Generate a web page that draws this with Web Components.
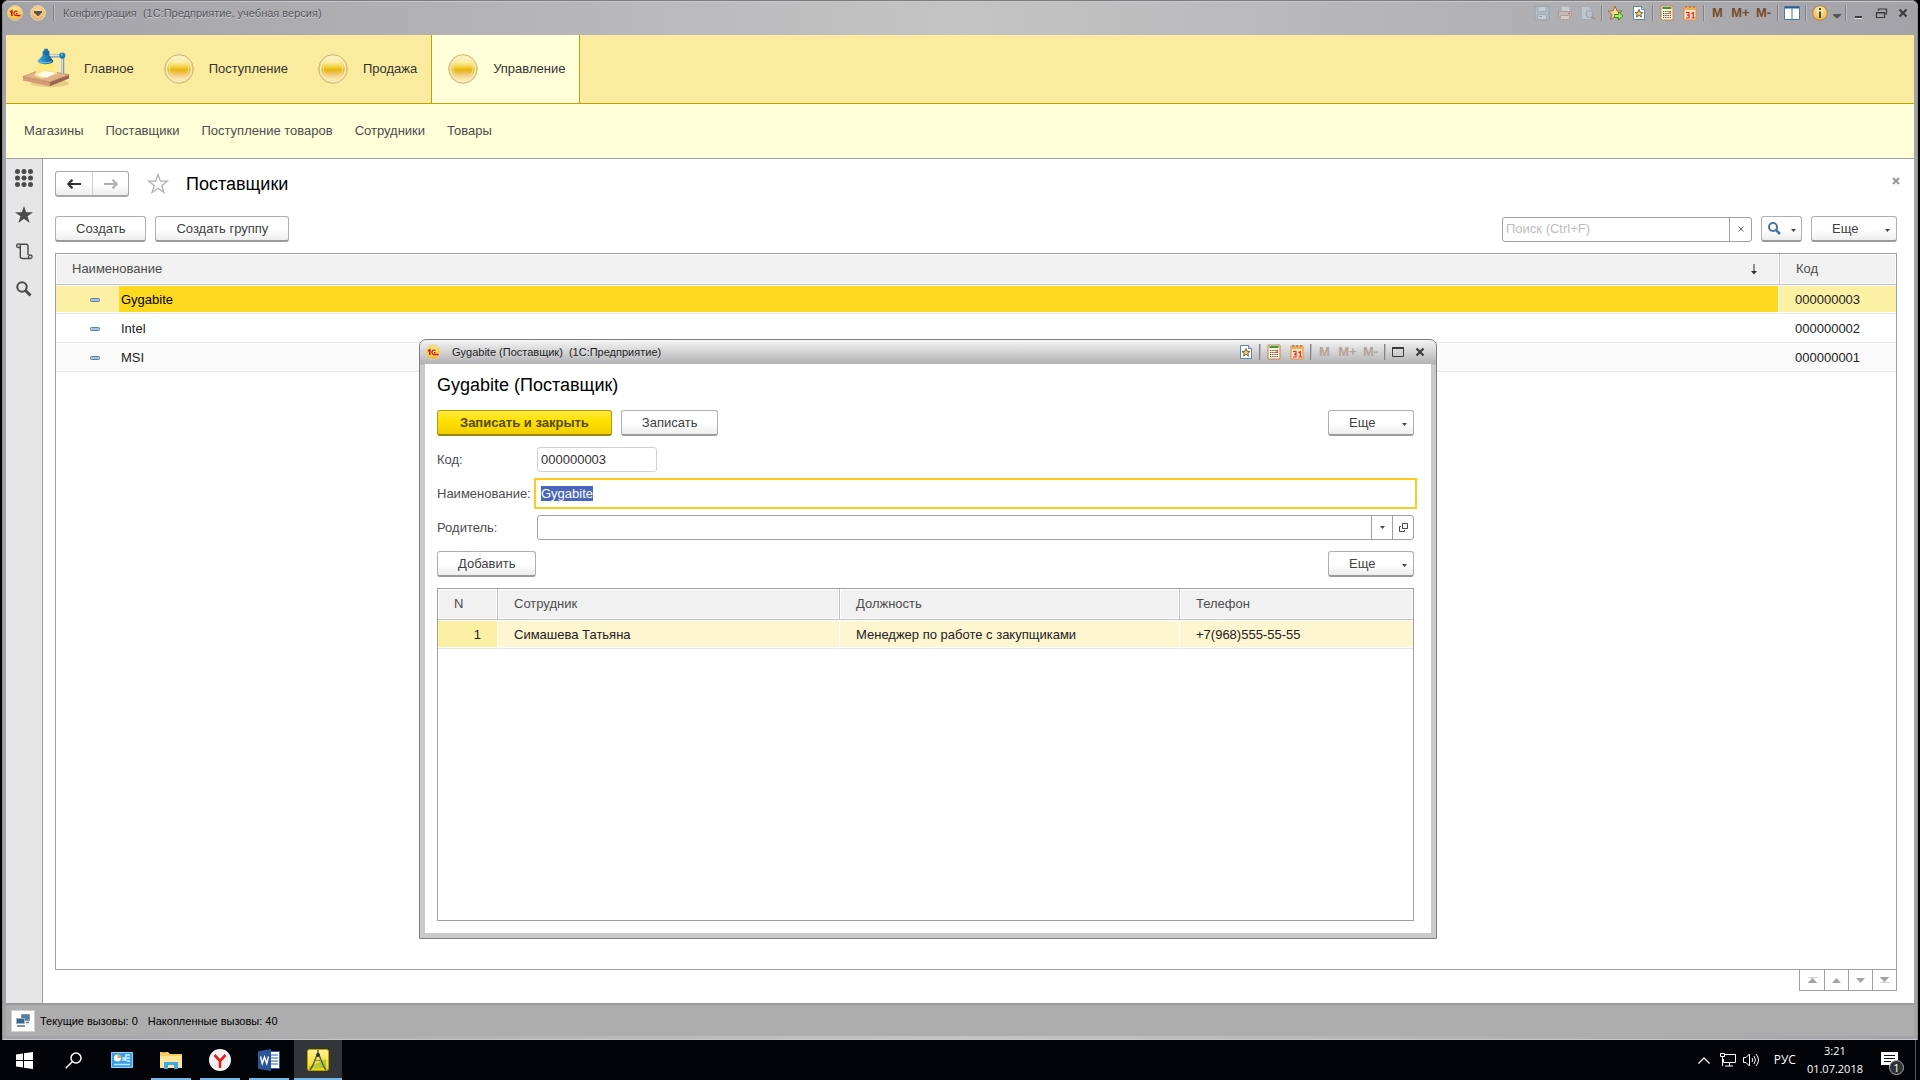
<!DOCTYPE html>
<html lang="ru">
<head>
<meta charset="utf-8">
<title>Конфигурация (1С:Предприятие, учебная версия)</title>
<style>
  html, body { height: 100%; margin: 0; }
  body { background: #000; color: #404040; font: 13px/16px "Liberation Sans", Arial, sans-serif; overflow: hidden; }
</style>
</head>
<body>
<app-desktop>
  <app-window>
    <title-bar slot="title" kind="main" caption="Конфигурация  (1С:Предприятие, учебная версия)"></title-bar>
    <section-bar slot="sections">
      <section-tab icon="lamp" wide>Главное</section-tab>
      <section-tab icon="coin">Поступление</section-tab>
      <section-tab icon="coin">Продажа</section-tab>
      <section-tab icon="coin" active>Управление</section-tab>
    </section-bar>
    <sub-nav slot="nav" items="Магазины|Поставщики|Поступление товаров|Сотрудники|Товары"></sub-nav>
    <side-rail slot="rail"></side-rail>
    <list-page></list-page>
    <status-bar slot="status"></status-bar>
  </app-window>
  <supplier-dialog slot="dialog"></supplier-dialog>
  <task-bar slot="taskbar"></task-bar>
</app-desktop>

<script>
const svg = (w, h, body) => `<svg width="${w}" height="${h}" viewBox="0 0 ${w} ${h}" aria-hidden="true">${body}</svg>`;
const starPath = "M8 1l2 5h5l-4 3.300 1.500 5.200L8 11.500l-4.500 3L5 9.300 1 6h5z";

const ICONS = {
  logo: svg(16, 16, `<defs><radialGradient id="g" cx=".5" cy=".35" r=".7"><stop offset="0" stop-color="#fff6a0"/><stop offset=".7" stop-color="#f7c948"/><stop offset="1" stop-color="#c98a3c"/></radialGradient></defs><circle cx="8" cy="8" r="7.300" fill="url(#g)" stroke="#e9d3b4"/><path d="M3 7.200L4.800 5.800V11" fill="none" stroke="#d8150d" stroke-width="1.600"/><path d="M10.500 6.600A2.200 2.200 0 1 0 9 10.500h4.500M9 8.700h1.500" fill="none" stroke="#d8150d" stroke-width="1.300"/>`),
  menuBall: svg(16, 16, `<defs><radialGradient id="g" cx=".5" cy=".4" r=".65"><stop offset="0" stop-color="#fde4b4"/><stop offset=".7" stop-color="#f2bb70"/><stop offset="1" stop-color="#c98d4c"/></radialGradient></defs><circle cx="8" cy="8" r="7.300" fill="url(#g)" stroke="#f2d8b5"/><path d="M4 6h8v1.500L8.500 11h-1L4 7.500z" fill="#5d5347"/>`),
  save: svg(16, 16, `<g opacity=".55"><path d="M1 1h14v14H1z" fill="#b3c6d3" stroke="#7d99ae"/><path d="M4 1.500h8v5H4zM3.500 9.500h9v5h-9z" fill="#dfe6ea" stroke="#8fa6b6"/><path d="M5 11.500h3" stroke="#7d99ae"/></g>`),
  print: svg(16, 16, `<g opacity=".55"><path d="M4 1h7l2 2v4H4z" fill="#e2e5ea" stroke="#98a2b0"/><path d="M1.500 6.500h13v6h-13z" fill="#d8c5ba" stroke="#ac8d80"/><path d="M3.500 10.500h9v4h-9z" fill="#f1e9e1" stroke="#a89a92"/><path d="M11 8.500h2" stroke="#d0593c" stroke-width="1.500"/></g>`),
  preview: svg(16, 16, `<g opacity=".55"><path d="M1.500 1.500h7l3 3v10h-10z" fill="#cbd8e2" stroke="#9cb0c0"/><circle cx="9.500" cy="9" r="3.500" fill="#c1d5e4" stroke="#8196a9"/><path d="M12 11.500l3 3" stroke="#b57c66" stroke-width="2"/></g>`),
  starAdd: svg(17, 16, `<path d="${starPath}" fill="#ffd998" stroke="#98703a"/><path d="M7.500 9.500h4v-2.500l4.500 4-4.500 4v-2.500h-4z" fill="#a6ea68" stroke="#3f8f20"/>`),
  starPage: svg(16, 16, `<path d="M2.500 1.500h8l3 3v10h-11z" fill="#fff" stroke="#5f87a4"/><path d="M10.500 1.500v3h3" fill="#dfeaf2" stroke="#5f87a4"/><path d="M8 4.500l1.200 2.800 2.800.200-2.200 1.700.8 2.900L8 10.400l-2.600 1.700.8-2.900L4 7.500l2.800-.2z" fill="#f7c766" stroke="#5d5849" stroke-width=".9"/>`),
  calc: svg(14, 16, `<path d="M1 1h12v14H1z" fill="#fff3dc" stroke="#b98753"/><path d="M2.500 3h9" stroke="#3f963d" stroke-width="2"/><path d="M3 6.500h8M3 8.500h8M3 10.500h8M3 12.500h8" stroke="#6d4a35" stroke-dasharray="1.300 .93"/><path d="M10 6v3" stroke="#df4c31" stroke-width="1.300"/>`),
  calendar: svg(14, 16, `<path d="M1 2h12v13H1z" fill="#ffe0c2" stroke="#dc8e4b"/><path d="M1 2h12v3H1z" fill="#e9b05a"/><path d="M3 1v2M7 1v2M11 1v2" stroke="#8e6336"/><path d="M3 7.500h3v5.500H3M4 10.200h2M8.500 8.700L10.300 7.500V13M8.500 13H12" fill="none" stroke="#e32a1c" stroke-width="1.200"/>`),
  panels: svg(16, 14, `<path d="M.5.500h15v13H.5z" fill="#fff" stroke="#467da8"/><path d="M1 1.500h14" stroke="#2b5f8c" stroke-width="2"/><path d="M8 2v11" stroke="#467da8"/>`),
  info: svg(16, 16, `<defs><radialGradient id="g" cx=".5" cy=".3" r=".8"><stop offset="0" stop-color="#fff0c0"/><stop offset=".8" stop-color="#f2b34e"/><stop offset="1" stop-color="#a86e2a"/></radialGradient></defs><circle cx="8" cy="8" r="7.300" fill="url(#g)" stroke="#b38549"/><path d="M8 3v2M8 6.500V13" stroke="#3c5c20" stroke-width="2"/>`),
  caretWide: svg(8, 4, `<path d="M0 0h8v1L5 4H3L0 1z" fill="#555"/>`),
  minimize: svg(10, 12, `<path d="M1 10h7" stroke="#3c3c3c" stroke-width="2"/><path d="M1 11.500h7" stroke="#e3e3e3"/>`),
  restore: svg(13, 12, `<path d="M3.500 4V2h8v5H10M3 2h9" fill="none" stroke="#3c3c3c" stroke-width="1.200"/><path d="M1.500 5.500h8v5h-8zM1 6h9" fill="none" stroke="#3c3c3c" stroke-width="1.200"/>`),
  maximize: svg(12, 12, `<path d="M.5 1.500h11v9H.5z" fill="none" stroke="#3c3c3c"/><path d="M0 2h12" stroke="#3c3c3c" stroke-width="2"/>`),
  close: svg(10, 10, `<path d="M1.500 1.500l7 7M8.500 1.500l-7 7" stroke="#3c3c3c" stroke-width="2.200"/>`),
  lamp: svg(50, 44, `<defs><linearGradient id="b" x1="0" x2="1"><stop offset="0" stop-color="#4aa9d6"/><stop offset=".5" stop-color="#2382b9"/><stop offset="1" stop-color="#0e5682"/></linearGradient><linearGradient id="y" x1="0" x2="0" y1="0" y2="1"><stop offset="0" stop-color="#ffe96b"/><stop offset="1" stop-color="#fff3a5" stop-opacity=".7"/></linearGradient></defs>
    <ellipse cx="29" cy="37" rx="20" ry="4" fill="#d4bb78" opacity=".6"/>
    <path d="M1 30L29 35.500V40L1 34z" fill="#d69a75"/><path d="M29 35.500L49 28V32L29 40z" fill="#99664a"/>
    <path d="M1 30L20 22.500 49 28 29 35.500z" fill="#e1b38b" stroke="#b77f5c" stroke-width=".7"/>
    <path d="M18 16h14l5 11-16 5-8-3z" fill="url(#y)"/><path d="M15 28l8-4 12 2-9 5z" fill="#fffce8"/>
    <path d="M26 8.500h16M42.500 10V27" stroke="#8598a4" stroke-width="3"/><path d="M27 8h15M42 10V27" stroke="#dce4e8" stroke-width="1.200"/>
    <path d="M23 1h4v2h1.500v5l4 5.500q1 3-8 3.500-9-.5-8-3.500l5-5.500V3H23z" fill="url(#b)"/><path d="M18 14.500q6.500 2 13 0" fill="none" stroke="#7fc4e6"/><path d="M22 4.500h6M22 6.500h6" stroke="#11517a" stroke-width=".8"/><circle cx="42" cy="8" r="3.200" fill="#1c7fb5"/><circle cx="41.500" cy="7" r="1.200" fill="#71bde0"/>`),
  coin: svg(32, 32, `<defs><linearGradient id="a" x1="0" x2="0" y1="0" y2="1"><stop offset="0" stop-color="#fffbe2"/><stop offset=".22" stop-color="#fbec9c"/><stop offset=".42" stop-color="#f1cf3a"/><stop offset=".54" stop-color="#e5b60f"/><stop offset=".66" stop-color="#ecc04c"/><stop offset=".8" stop-color="#f6cf8a"/><stop offset="1" stop-color="#fdeecb"/></linearGradient><linearGradient id="r" x1="0" x2="0" y1="0" y2="1"><stop offset="0" stop-color="#fbf0b4"/><stop offset=".52" stop-color="#ecd06a"/><stop offset="1" stop-color="#f8e2ac"/></linearGradient></defs>
    <circle cx="16" cy="16" r="14.300" fill="url(#r)" stroke="#cfb878" stroke-width="1"/><circle cx="16" cy="16" r="12.500" fill="none" stroke="#fdf5cd" stroke-width="1"/><circle cx="16" cy="16" r="11.300" fill="url(#a)"/><circle cx="16" cy="16" r="9.800" fill="none" stroke="#f7e295" stroke-width=".9"/>`),
  grid: svg(18, 18, `<g fill="#4a4a4a">${[2.5, 9, 15.5].map(y => [2.5, 9, 15.5].map(x => `<circle cx="${x}" cy="${y}" r="2.500"/>`).join("")).join("")}</g>`),
  starSolid: svg(18, 17, `<path d="M9 0l2.200 6.200H18l-5.500 4 2.200 6.800L9 12.800 3.300 17l2.200-6.800L0 6.200h6.800z" fill="#4a4a4a"/>`),
  scroll: svg(17, 17, `<path d="M3.700 4.500H2.500a1.800 1.800 0 1 1 1.800-1.800V13.500a2 2 0 0 0 2 2H14M3 1.200h7a2 2 0 0 1 2 2V12" fill="none" stroke="#4a4a4a" stroke-width="1.400"/><circle cx="14.300" cy="13.800" r="1.800" fill="none" stroke="#4a4a4a" stroke-width="1.300"/>`),
  search: svg(16, 16, `<circle cx="6" cy="6" r="4.700" fill="none" stroke="#4a4a4a" stroke-width="2"/><path d="M9.500 9.500l5 5" stroke="#4a4a4a" stroke-width="3"/>`),
  find: svg(13, 13, `<circle cx="5" cy="5" r="4" fill="none" stroke="#4d7299" stroke-width="2"/><path d="M8 8l4 4" stroke="#4d7299" stroke-width="2.500"/>`),
  back: svg(14, 10, `<path d="M1 5h13M5.500.7L1.200 5l4.300 4.300" fill="none" stroke="#333" stroke-width="2.200"/>`),
  forward: svg(14, 10, `<path d="M0 5h13M8.500.7L12.800 5 8.500 9.300" fill="none" stroke="#b0b0b0" stroke-width="2.200"/>`),
  starLine: svg(22, 21, `<path d="M11 1.500l2.400 6.700h7l-5.600 4.300 2.100 7L11 15.300 5.100 19.500l2.100-7L1.600 8.200h7z" fill="#fff" stroke="#b0b0b0" stroke-width="1.300"/>`),
  pageClose: svg(8, 8, `<path d="M1 1l6 6M7 1L1 7" stroke="#999" stroke-width="2"/>`),
  clear: svg(6, 6, `<path d="M.5.500l5 5M5.500.500l-5 5" stroke="#555" stroke-width=".9"/>`),
  caret: svg(5, 3, `<path d="M0 0h5L2.500 3z" fill="#444"/>`),
  sort: svg(6, 11, `<path d="M3 0v9" stroke="#333"/><path d="M0 7h6L3 10.500z" fill="#333"/>`),
  item: svg(10, 4, `<rect x=".5" y=".5" width="9" height="3" rx="1" fill="#a7c4dc" stroke="#5b7f9f"/>`),
  first: svg(9, 6, `<path d="M0 .5h9M4.500 1L9 6H0z" fill="#a3a3a3" stroke="#a3a3a3" stroke-width=".5"/>`),
  up: svg(9, 5, `<path d="M4.500 0L9 5H0z" fill="#a3a3a3"/>`),
  down: svg(9, 5, `<path d="M0 0h9L4.500 5z" fill="#a3a3a3"/>`),
  last: svg(9, 6, `<path d="M0 5.500h9M0 0h9L4.500 5z" fill="#a3a3a3" stroke="#a3a3a3" stroke-width=".5"/>`),
  open: svg(9, 9, `<path d="M3.500.500h5v5h-5zM2 3.500H.5v5h5V7" fill="none" stroke="#444"/>`),
  servers: svg(14, 13, `<path d="M5.500.500h8v6h-8z" fill="#547ea0" stroke="#8496a3"/><path d="M.5 4.500h8v5h-8z" fill="#31658c" stroke="#9db0bd"/><path d="M1 12h8M10 8.500h3" stroke="#60727e" stroke-width="1.500"/>`),
  windows: svg(17, 17, `<path d="M0 2.500L7 1.500V8H0zM8 1.300L17 0V8H8zM0 9h7v6.500L0 14.500zM8 9h9v8L8 15.700z" fill="#fff"/>`),
  taskSearch: svg(17, 17, `<circle cx="11" cy="6" r="5" fill="none" stroke="#fff" stroke-width="1.500"/><path d="M7.200 9.800L.7 16.300" stroke="#fff" stroke-width="1.500"/>`),
  panelApp: svg(22, 16, `<path d="M.5.500h21v15H.5z" fill="#39a0e3" stroke="#8fd3ff"/><circle cx="6.500" cy="6" r="3.500" fill="#fff"/><path d="M6.500 6V2.500A3.500 3.500 0 0 1 10 6z" fill="#f0a73a"/><path d="M12 9V6h2v3M15 9V3h4M16 6h3M16 9h3" fill="none" stroke="#d9f1ff" stroke-width="1.300"/><path d="M3 12.500h16" stroke="#bfe6ff" stroke-width="1.500"/>`),
  explorer: svg(22, 18, `<path d="M0 1h8l2 2h12v14H0z" fill="#f4cf63"/><path d="M0 5h22v12H0z" fill="#ffe597"/><path d="M4 18v-7h14v7h-4v-4H8v4z" fill="#3fa9e6"/><path d="M2 1.500h4" stroke="#e79b2f"/>`),
  yandex: svg(22, 22, `<circle cx="11" cy="11" r="11" fill="#f2f2f2"/><path d="M5.500 6l5.500 6 5.500-6M11 12v7" fill="none" stroke="#e0201b" stroke-width="2.600"/>`),
  word: svg(22, 22, `<path d="M11 2.500h10.500v17H11z" fill="#fff" stroke="#2f5da8"/><path d="M13 6h7M13 9h7M13 12h7M13 15h7" stroke="#2f5da8" stroke-width="1.200"/><path d="M0 2.300L13 0v22L0 19.700z" fill="#2b579a"/><path d="M2.500 7.500L4.300 14.500 6.500 8l2.200 6.500 1.800-7" fill="none" stroke="#fff" stroke-width="1.400"/>`),
  compass: svg(22, 22, `<defs><linearGradient id="c" x1="0" x2="0" y1="0" y2="1"><stop offset="0" stop-color="#fff39a"/><stop offset="1" stop-color="#efd800"/></linearGradient></defs><rect x=".5" y=".5" width="21" height="21" rx="2" fill="url(#c)" stroke="#bba100"/><path d="M2 18L19 10v9l-17 1z" fill="#b2cb34"/><path d="M11 1v5M10 6L6 16l-3 5M12 6l4 10 3 5" fill="none" stroke="#5a5a52" stroke-width="1.500"/><path d="M8 11q3 1.500 6 0" fill="none" stroke="#77776c"/><circle cx="11" cy="6" r="2" fill="#33332e"/>`),
  chevron: svg(12, 7, `<path d="M.5 6.500L6 1l5.500 5.500" fill="none" stroke="#fff" stroke-width="1.300"/>`),
  network: svg(16, 14, `<path d="M5 1.500h10.500v8H3.500V6M9.500 10v3M5 13h8" fill="none" stroke="#fff"/><path d="M.5.500h4v3h-4zM2.500 4v9" fill="none" stroke="#fff"/>`),
  volume: svg(17, 14, `<path d="M.5 4.500H3L6.500 1v12L3 9.500H.5z" fill="none" stroke="#fff"/><path d="M9 5q1.500 2 0 4M11 3q3 4 0 8M13 1q5 6 0 12" fill="none" stroke="#fff"/>`),
  note: svg(17, 16, `<path d="M0 0h17v13h-6l-3 3v-3H0z" fill="#fff"/><path d="M3 3.500h11M3 6.500h11M3 9.500h7" stroke="#111"/>`)
};

class Base extends HTMLElement {
  constructor() { super(); this.attachShadow({ mode: "open" }); }
  connectedCallback() {
    this.shadowRoot.innerHTML = `<style>:host,*{box-sizing:border-box}button{font:inherit;color:inherit}${this.css()}</style>${this.html()}`;
    this.ready();
  }
  css() { return ""; }
  html() { return "<slot></slot>"; }
  ready() {}
}
const define = (name, cls) => customElements.define(name, cls);

define("ui-icon", class extends Base {
  css() { return `:host{display:inline-flex;flex:none;align-items:center;justify-content:center}svg{display:block}`; }
  html() { return ICONS[this.getAttribute("name")] || ""; }
});

define("ui-button", class extends Base {
  css() { return `:host{display:block;flex:none}
    button{display:flex;align-items:center;justify-content:center;gap:8px;width:100%;height:26px;padding:1px 20px 0;color:#404040;
      border:1px solid #b0b0b0;border-bottom:2px solid #9a9a9a;border-radius:3px;background:linear-gradient(#fff 55%,#ededed);white-space:nowrap}
    :host([primary]) button{font-weight:bold;padding:1px 22px 0;color:#54490a;border-color:#b39d0c;border-bottom-color:#998500;background:linear-gradient(#ffea3d,#ffe000 45%,#efcd00)}
    :host([menu]) button{width:86px;padding:1px 6px 0 20px;justify-content:space-between}
    :host([menu]) ui-icon{margin-top:3px}
    :host([find]) button{width:41px;padding:0 6px}`; }
  html() {
    const caret = this.hasAttribute("menu") ? `<ui-icon name="caret"></ui-icon>` : "";
    return `<button type="button" aria-label="${this.getAttribute("label") || ""}"><slot></slot>${caret}</button>`.replace(` aria-label=""`, "");
  }
});

define("title-bar", class extends Base {
  css() { return `
    :host{display:flex;align-items:center;height:35px;padding-bottom:9px;color:#55555a;text-shadow:0 1px 0 #d4d4d6}
    :host([kind=dialog]){height:24px;padding-bottom:0;color:#222}
    button{display:flex;align-items:center;justify-content:center;width:23px;height:22px;padding:0;border:0;background:none}
    .lead{display:flex;gap:7px;align-items:center;padding-left:1px}
    :host([kind=dialog]) .lead{padding-left:0}
    .lead button{width:16px}
    .cap{flex:1;padding-left:9px;font:11px/16px "Liberation Sans",Arial,sans-serif;white-space:pre}
    :host([kind=dialog]) .cap{padding-left:11px}
    i{width:1px;height:16px;margin:0 2px;background:#818186;box-shadow:1px 0 #bcbcbf}
    .lead i{margin:0}
    .m{font:bold 13px/16px "Liberation Sans",Arial,sans-serif;color:#7a4a2c;text-shadow:none}
    :host([kind=dialog]) .m{color:#b1a49c}
    .narrow{width:12px;padding-top:5px}
    .tools{display:flex;align-items:center}
    .end button{width:22px}.end{display:flex}`; }
  html() {
    const b = (n, t, c = "") => `<button type="button" class="${c}" aria-label="${t}"><ui-icon name="${n}"></ui-icon></button>`;
    const m = `<button type="button" class="m">M</button><button type="button" class="m">M+</button><button type="button" class="m">M-</button>`;
    const cap = `<span class="cap">${this.getAttribute("caption")}</span>`;
    if (this.getAttribute("kind") === "dialog")
      return `<span class="lead">${b("logo", "Меню")}</span>${cap}
        <span class="tools">${b("starPage", "Избранное")}<i></i>${b("calc", "Калькулятор")}${b("calendar", "Календарь")}<i></i>${m}<i></i></span>
        <span class="end">${b("maximize", "Развернуть")}${b("close", "Закрыть")}</span>`;
    return `<span class="lead">${b("logo", "Меню")}${b("menuBall", "Главное меню")}<i></i></span>${cap}
      <span class="tools">${b("save", "Сохранить")}${b("print", "Печать")}${b("preview", "Просмотр")}<i></i>${b("starAdd", "Добавить в избранное")}${b("starPage", "Избранное")}<i></i>${b("calc", "Калькулятор")}${b("calendar", "Календарь")}<i></i>${m}<i></i>${b("panels", "Панели")}<i></i>${b("info", "Справка")}${b("caretWide", "Еще", "narrow")}<i></i></span>
      <span class="end">${b("minimize", "Свернуть")}${b("restore", "Восстановить")}${b("close", "Закрыть")}</span>`;
  }
});

define("section-bar", class extends Base {
  css() { return `:host{display:flex;height:69px;background:#fbeb9e;border-bottom:1px solid #bfa200}`; }
});
define("section-tab", class extends Base {
  css() { return `:host{display:block}
    a{display:flex;align-items:center;gap:6px;height:100%;padding:0 14px 0 7px;color:#333;text-decoration:none}
    ui-icon{width:48px}
    :host([wide]) a{gap:14px;padding-left:16px}
    :host([active]){background:#ffffd9;border:solid #bfa200;border-width:0 1px}`; }
  html() { return `<a href="#"><ui-icon name="${this.getAttribute("icon")}"></ui-icon><slot></slot></a>`; }
});
define("sub-nav", class extends Base {
  css() { return `:host{display:flex;align-items:center;gap:22px;height:55px;padding:0 18px;background:#ffffd9;border-bottom:1px solid #9e9e9e}
    a{color:#4d4d4d;text-decoration:none}`; }
  html() { return this.getAttribute("items").split("|").map(t => `<a href="#">${t}</a>`).join(""); }
});
define("side-rail", class extends Base {
  css() { return `:host{display:flex;flex:none;flex-direction:column;align-items:center;gap:8px;width:37px;padding-top:4px;background:#e6e6e6;border-right:1px solid #9e9e9e}
    button{display:flex;align-items:center;justify-content:center;width:32px;height:29px;padding:0;border:0;background:none}`; }
  html() { return [["grid", "Меню функций"], ["starSolid", "Избранное"], ["scroll", "История"], ["search", "Поиск"]].map(([n, t]) => `<button type="button" aria-label="${t}"><ui-icon name="${n}"></ui-icon></button>`).join(""); }
});

const gridCss = `
  table{width:100%;border-collapse:separate;border-spacing:0;table-layout:fixed}
  th{height:31px;padding:0;border-bottom:1px solid #c0c0c0;font-weight:normal;text-align:left;background:#f1f1f1;color:#4d4d4d;box-shadow:inset 0 0 0 1px #fff}
  th+th{border-left:1px solid #c0c0c0}
  td{height:29px;padding:1px 0 0;color:#222;border-bottom:1px solid #e5e5e5;box-shadow:inset 0 1px #fff,inset 0 -1px #fff}
  tbody tr{white-space:nowrap}`;

define("list-page", class extends Base {
  css() { return `:host{display:flex;flex:1;flex-direction:column;min-width:0;padding:12px 17px 12px 12px;background:#fff}
    .head{display:flex;align-items:center;height:26px}
    .nav{display:flex;height:26px;border:1px solid #a8a8a8;border-bottom-width:2px;border-radius:3px;background:linear-gradient(#fff 50%,#ededed);overflow:hidden}
    .nav button{display:flex;align-items:center;justify-content:center;width:36px;padding:0;border:0;background:none}
    .nav button+button{border-left:1px solid #cfcfcf}
    .star{margin-left:18px;padding:0;border:0;background:none;width:22px;height:22px}
    h1{flex:1;margin:0 0 0 17px;font:18px/24px "Liberation Sans",Arial,sans-serif;color:#000}
    .x{display:flex;margin:0 -4px 6px 0;padding:0;width:10px;border:0;background:none;justify-content:center}
    .bar{display:flex;align-items:center;gap:9px;margin-top:19px}
    .search{display:flex;height:25px;width:250px;margin-left:auto;border:1px solid #a0a0a0;border-radius:3px}
    .search input{flex:1;min-width:0;border:0;padding:0 3px;outline:0;background:none;font:inherit;color:#333}
    .search input::placeholder{color:#bdbdbd;opacity:1}
    .search button{display:flex;align-items:center;justify-content:center;width:22px;padding:0;border:0;border-left:1px solid #a0a0a0;background:none}
    .find{display:flex;align-items:center;gap:10px}
    .find ui-icon+ui-icon{margin-top:3px}
    .box{flex:1;margin-top:11px;border:1px solid #a0a0a0}
    ${gridCss}
    td.mark{padding-left:34px;vertical-align:middle}
    td.mark ui-icon{display:flex;width:10px}
    td.name{padding-left:2px}
    th.main,th.code,td.code{padding-left:16px}
    tr.odd td{background:#fafafa}
    tr.sel td{background:#fcf0a4}
    tr.sel td.name{background:#fcd91f;color:#000;border-right:1px solid #fff}
    .cap{display:flex;justify-content:space-between;align-items:center;padding-right:22px}
    .pager{display:flex;align-self:flex-end;border:solid #a0a0a0;border-width:0 1px 1px}
    .pager button{display:flex;align-items:center;justify-content:center;width:24px;height:20px;padding:0;border:0;background:none}
    .pager button+button{border-left:1px solid #a0a0a0}`; }
  html() {
    const rows = [["Gygabite", "000000003", "sel"], ["Intel", "000000002", ""], ["MSI", "000000001", "odd"]];
    return `<div class="head">
        <div class="nav"><button type="button" aria-label="Назад"><ui-icon name="back"></ui-icon></button><button type="button" aria-label="Вперед"><ui-icon name="forward"></ui-icon></button></div>
        <button class="star" type="button" aria-label="В избранное"><ui-icon name="starLine"></ui-icon></button>
        <h1>Поставщики</h1>
        <button class="x" type="button" aria-label="Закрыть"><ui-icon name="pageClose"></ui-icon></button>
      </div>
      <div class="bar">
        <ui-button>Создать</ui-button><ui-button>Создать группу</ui-button>
        <div class="search"><input type="text" aria-label="Поиск" placeholder="Поиск (Ctrl+F)"><button type="button" aria-label="Очистить"><ui-icon name="clear"></ui-icon></button></div>
        <ui-button find label="Найти"><span class="find"><ui-icon name="find"></ui-icon><ui-icon name="caret"></ui-icon></span></ui-button>
        <ui-button menu>Еще</ui-button>
      </div>
      <div class="box"><table>
        <colgroup><col style="width:63px"><col><col style="width:117px"></colgroup>
        <thead><tr><th class="main" colspan="2"><div class="cap">Наименование<ui-icon name="sort"></ui-icon></div></th><th class="code">Код</th></tr></thead>
        <tbody>${rows.map(([n, c, k]) => `<tr class="${k}"><td class="mark"><ui-icon name="item"></ui-icon></td><td class="name">${n}</td><td class="code">${c}</td></tr>`).join("")}</tbody>
      </table></div>
      <div class="pager">${[["first", "В начало"], ["up", "Вверх"], ["down", "Вниз"], ["last", "В конец"]].map(([n, t]) => `<button type="button" aria-label="${t}"><ui-icon name="${n}"></ui-icon></button>`).join("")}</div>`;
  }
});

define("supplier-dialog", class extends Base {
  css() { return `:host{position:absolute;left:419px;top:339px;width:1018px;height:600px;display:flex;flex-direction:column;padding:0 5px 5px;
      border:1px solid #808080;border-radius:7px 7px 0 0;background:linear-gradient(#f4f4f4,#d9d9da 10px,#b2b2b4 24px,#c9cacc 25px)}
    .body{display:flex;flex:1;flex-direction:column;padding:9px 17px 12px 12px;background:#fff}
    h1{margin:0 0 13px;font:18px/24px "Liberation Sans",Arial,sans-serif;color:#000}
    .bar{display:flex;gap:9px}
    .bar .more{margin-left:auto}
    .fields{display:grid;grid-template-columns:100px 1fr;grid-auto-rows:25px;gap:9px 0;align-items:center;margin:11px 0}
    label{color:#4d4d4d}
    input{height:25px;width:100%;padding:0 3px;border:1px solid #a0a0a0;border-radius:3px;background:#fff;font:inherit;color:#333}
    #code{width:120px;border-color:#d2d2d2}
    #name{border-color:transparent;outline:2px solid #fccb1d;outline-offset:1px;border-radius:0}
    #name::selection{background:#4a66bb;color:#fff}
    .combo{display:flex;height:25px;border:1px solid #a0a0a0;border-radius:3px}
    .combo input{flex:1;height:23px;border:0;outline:0}
    .combo button{display:flex;align-items:center;justify-content:center;width:21px;padding:0;border:0;border-left:1px solid #a0a0a0;background:none}
    .box{flex:1;margin-top:11px;border:1px solid #a0a0a0}
    ${gridCss}
    th,td{padding-left:16px}
    td{background:#fdf6d0}
    td+td{border-left:1px solid #fff}
    td:first-child{padding:1px 16px 0 0;text-align:right;background:#fcf0a4}`; }
  html() {
    return `<title-bar kind="dialog" caption="Gygabite (Поставщик)  (1С:Предприятие)"></title-bar>
      <div class="body">
        <h1>Gygabite (Поставщик)</h1>
        <div class="bar"><ui-button primary>Записать и закрыть</ui-button><ui-button>Записать</ui-button><ui-button class="more" menu>Еще</ui-button></div>
        <div class="fields">
          <label for="code">Код:</label><input id="code" type="text" value="000000003">
          <label for="name">Наименование:</label><input id="name" type="text" value="Gygabite">
          <label for="parent">Родитель:</label><div class="combo"><input id="parent" type="text"><button type="button" aria-label="Выбрать"><ui-icon name="caret"></ui-icon></button><button type="button" aria-label="Открыть"><ui-icon name="open"></ui-icon></button></div>
        </div>
        <div class="bar"><ui-button>Добавить</ui-button><ui-button class="more" menu>Еще</ui-button></div>
        <div class="box"><table>
          <colgroup><col style="width:59px"><col style="width:342px"><col style="width:340px"><col></colgroup>
          <thead><tr><th>N</th><th>Сотрудник</th><th>Должность</th><th>Телефон</th></tr></thead>
          <tbody><tr><td>1</td><td>Симашева Татьяна</td><td>Менеджер по работе с закупщиками</td><td>+7(968)555-55-55</td></tr></tbody>
        </table></div>
      </div>`;
  }
  ready() { const f = this.shadowRoot.getElementById("name"); f.focus(); f.select(); }
});

define("status-bar", class extends Base {
  css() { return `:host{display:flex;align-items:center;height:33px;padding-left:5px;background:#adadad;border-top:2px solid #999;color:#000;font-size:11px}
    button{display:flex;align-items:center;justify-content:center;width:24px;height:22px;padding:0;border:1px solid #d0d0d0;background:#fff}
    span{margin-left:5px}span+span{margin-left:10px}`; }
  html() { return `<button type="button" aria-label="Соединение"><ui-icon name="servers"></ui-icon></button><span>Текущие вызовы: 0</span><span>Накопленные вызовы: 40</span>`; }
});

define("app-window", class extends Base {
  css() { return `:host{display:flex;flex:1;flex-direction:column;min-height:0;margin:0 2px;padding:0 4px 4px;border-radius:7px 7px 0 0;
      background:linear-gradient(90deg,#a3a3a7,#c4c4c5 50%,#a3a3a7);box-shadow:inset 0 1px #7d7d80,inset 0 2px #c8c8ca,inset 1px 0 #8e8e90,inset -1px 0 #8e8e90,inset 0 -1px #c4c8c8}
    .work{display:flex;flex:1;min-height:0}`; }
  html() { return `<slot name="title"></slot><slot name="sections"></slot><slot name="nav"></slot><div class="work"><slot name="rail"></slot><slot></slot></div><slot name="status"></slot>`; }
});

define("task-bar", class extends Base {
  css() { return `:host{display:flex;height:40px;background:#020407;color:#fff;font:11px/18px "Open Sans","Noto Sans",sans-serif}
    button{display:flex;align-items:center;justify-content:center;padding:0;border:0;background:none;height:40px}
    .apps{display:flex;gap:1px}
    .apps button{width:48px}
    .apps .run{box-shadow:inset 4px 0 #020407,inset -4px 0 #020407;background:linear-gradient(#020407 38px,#76b9ed 38px)}
    .apps .on{background:linear-gradient(#333539 38px,#76b9ed 38px)}
    .tray{display:flex;align-items:center;margin-left:auto}
    .tray button{width:24px}
    .lang{margin:0 11px 0 10px;font-size:12px}
    .clock{text-align:center}
    .tray .note{position:relative;width:53px;border-right:1px solid #55575a;margin-right:4px}
    .badge{position:absolute;left:26px;top:20px;width:15px;height:15px;border:1px solid #aaa;border-radius:50%;background:#303236;font-size:11px;line-height:14px}`; }
  html() {
    const apps = [["windows", "Пуск", ""], ["taskSearch", "Поиск", ""], ["panelApp", "Панель", ""], ["explorer", "Проводник", "run"], ["yandex", "Браузер", "run"], ["word", "Word", "run"], ["compass", "1С", "on"]];
    return `<div class="apps">${apps.map(([n, t, c]) => `<button type="button" class="${c}" aria-label="${t}"><ui-icon name="${n}"></ui-icon></button>`).join("")}</div>
      <div class="tray"><button type="button" aria-label="Значки"><ui-icon name="chevron"></ui-icon></button><button type="button" aria-label="Сеть"><ui-icon name="network"></ui-icon></button><button type="button" aria-label="Звук"><ui-icon name="volume"></ui-icon></button>
      <span class="lang">РУС</span><div class="clock">3:21<br>01.07.2018</div>
      <button type="button" class="note"><ui-icon name="note"></ui-icon><span class="badge">1</span></button></div>`;
  }
});

define("app-desktop", class extends Base {
  css() { return `:host{display:flex;flex-direction:column;position:relative;height:100vh}`; }
  html() { return `<slot></slot><slot name="dialog"></slot><slot name="taskbar"></slot>`; }
});
</script>
</body>
</html>
